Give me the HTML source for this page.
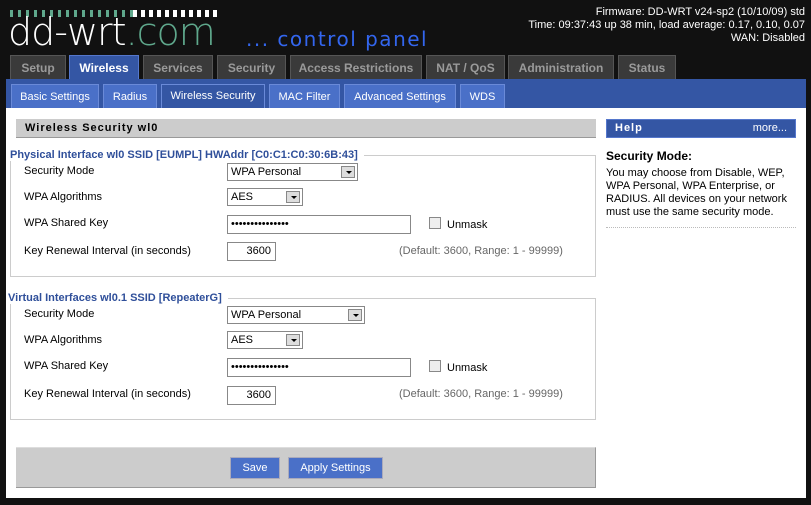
<!DOCTYPE html>
<html><head><style>
*{margin:0;padding:0;box-sizing:border-box}
body{width:811px;height:505px;background:#111;font-family:"Liberation Sans",Tahoma,sans-serif;font-size:11px;position:relative;overflow:hidden;color:#000}
.a{position:absolute}
.tab{position:absolute;top:55px;height:24px;background:#3a3a3a;border:1px solid #555;border-bottom:none;color:#9a9a9a;font-weight:bold;font-size:12px;text-align:center;line-height:24px}
.tab.on{background:#3456a4;color:#fff;border-color:#5577cc;height:25px}
.st{position:absolute;top:84px;height:24px;background:#4a70c8;border:1px solid #6a8ad8;border-bottom:none;color:#fff;font-size:11px;text-align:center;line-height:24px}
.st.on{background:#3456a4;line-height:22px}
.lbl{position:absolute;left:24px;font-size:11px}
.sel{position:absolute;left:227px;height:18px;border:1px solid #888;background:#fff;font-size:11px;line-height:16px;padding-left:3px}
.sel i{position:absolute;right:2px;top:2px;width:14px;height:12px;border:1px solid #888;background:#ddd}
.sel i:after{content:"";position:absolute;left:4px;top:4px;border-left:3px solid transparent;border-right:3px solid transparent;border-top:3px solid #000}
.inp{position:absolute;left:227px;height:19px;border:1px solid #888;background:#fff;font-size:11px;line-height:17px;padding-left:3px}
.fs{position:absolute;left:10px;width:586px;height:122px;border:1px solid #ccc}
.lg{position:absolute;left:10px;color:#2f4f9a;font-weight:bold;font-size:11px;background:#fff;padding-right:6px}
.cb{position:absolute;left:429px;width:12px;height:12px;border:1px solid #888;background:#eee}
.btn{position:absolute;top:457px;height:22px;background:#4a70c8;border:1px solid #aab;color:#fff;font-size:11px;text-align:center;line-height:20px}
</style></head><body>
<div class="a" style="left:10px;top:10px;width:124px;height:7px;background:repeating-linear-gradient(90deg,#5fa88c 0 3px,transparent 3px 8px)"></div>
<div class="a" style="left:133px;top:10px;width:85px;height:7px;background:repeating-linear-gradient(90deg,#fff 0 4px,transparent 4px 8px)"></div>
<div class="a" style="left:8px;top:12px;font-size:38px;color:#fff;letter-spacing:-1px;font-family:'DejaVu Sans',sans-serif;line-height:40px;font-weight:300">dd-wrt<span style="color:#5fa88c">.com</span></div>
<div class="a" style="left:246px;top:27px;font-size:20px;color:#3366ee;font-family:'DejaVu Sans',sans-serif;letter-spacing:1.5px">... control panel</div>
<div class="a" style="right:6px;top:6px;color:#fff;font-size:11px;text-align:right;line-height:13px">Firmware: DD-WRT v24-sp2 (10/10/09) std<br>Time: 09:37:43 up 38 min, load average: 0.17, 0.10, 0.07<br>WAN: Disabled</div>

<div class="tab" style="left:10px;width:56px">Setup</div>
<div class="tab on" style="left:69px;width:70px">Wireless</div>
<div class="tab" style="left:143px;width:70px">Services</div>
<div class="tab" style="left:217px;width:69px">Security</div>
<div class="tab" style="left:290px;width:132px">Access Restrictions</div>
<div class="tab" style="left:426px;width:79px">NAT / QoS</div>
<div class="tab" style="left:508px;width:106px">Administration</div>
<div class="tab" style="left:618px;width:58px">Status</div>

<div class="a" style="left:6px;top:79px;width:800px;height:29px;background:#3456a4"></div>
<div class="st" style="left:11px;width:88px">Basic Settings</div>
<div class="st" style="left:103px;width:54px">Radius</div>
<div class="st on" style="left:161px;width:104px">Wireless Security</div>
<div class="st" style="left:269px;width:71px">MAC Filter</div>
<div class="st" style="left:344px;width:112px">Advanced Settings</div>
<div class="st" style="left:460px;width:45px">WDS</div>

<div class="a" style="left:6px;top:108px;width:800px;height:390px;background:#fff"></div>
<div class="a" style="left:16px;top:119px;width:580px;height:19px;background:#ccc;border-bottom:1px solid #999;font-weight:bold;font-size:11px;letter-spacing:1px;line-height:19px;padding-left:9px">Wireless Security wl0</div>

<div class="fs" style="top:155px"></div>
<div class="lg" style="top:149px">Physical Interface wl0 SSID [EUMPL] HWAddr [C0:C1:C0:30:6B:43]</div>
<div class="lbl" style="top:165px">Security Mode</div>
<div class="sel" style="top:163px;width:131px">WPA Personal<i></i></div>
<div class="lbl" style="top:191px">WPA Algorithms</div>
<div class="sel" style="top:188px;width:76px">AES<i></i></div>
<div class="lbl" style="top:217px">WPA Shared Key</div>
<div class="inp" style="top:215px;width:184px">•••••••••••••••</div>
<div class="cb" style="top:217px"></div><div class="a" style="left:447px;top:219px">Unmask</div>
<div class="lbl" style="top:245px">Key Renewal Interval (in seconds)</div>
<div class="inp" style="top:242px;width:49px;text-align:right;padding-right:4px">3600</div>
<div class="a" style="left:399px;top:245px;color:#666">(Default: 3600, Range: 1 - 99999)</div>

<div class="fs" style="top:298px"></div>
<div class="lg" style="top:292px;left:8px">Virtual Interfaces wl0.1 SSID [RepeaterG]</div>
<div class="lbl" style="top:308px">Security Mode</div>
<div class="sel" style="top:306px;width:138px">WPA Personal<i></i></div>
<div class="lbl" style="top:334px">WPA Algorithms</div>
<div class="sel" style="top:331px;width:76px">AES<i></i></div>
<div class="lbl" style="top:360px">WPA Shared Key</div>
<div class="inp" style="top:358px;width:184px">•••••••••••••••</div>
<div class="cb" style="top:360px"></div><div class="a" style="left:447px;top:362px">Unmask</div>
<div class="lbl" style="top:388px">Key Renewal Interval (in seconds)</div>
<div class="inp" style="top:386px;width:49px;text-align:right;padding-right:4px">3600</div>
<div class="a" style="left:399px;top:388px;color:#666">(Default: 3600, Range: 1 - 99999)</div>

<div class="a" style="left:16px;top:447px;width:580px;height:41px;background:#ccc;border-top:1px solid #ddd;border-bottom:1px solid #999;border-right:1px solid #999"></div>
<div class="btn" style="left:230px;width:50px">Save</div>
<div class="btn" style="left:288px;width:95px">Apply Settings</div>

<div class="a" style="left:606px;top:119px;width:190px;height:19px;background:#3456a4;border:1px solid #5577cc;color:#fff;line-height:17px;padding:0 8px"><b style="letter-spacing:1px">Help</b><span style="float:right">more...</span></div>
<div class="a" style="left:606px;top:150px;width:190px;font-size:11px;line-height:13px"><b style="font-size:12px">Security Mode:</b><div style="margin-top:3px">You may choose from Disable, WEP, WPA Personal, WPA Enterprise, or RADIUS. All devices on your network must use the same security mode.</div></div>
<div class="a" style="left:606px;top:227px;width:190px;border-top:1px dotted #bbb"></div>
</body></html>
